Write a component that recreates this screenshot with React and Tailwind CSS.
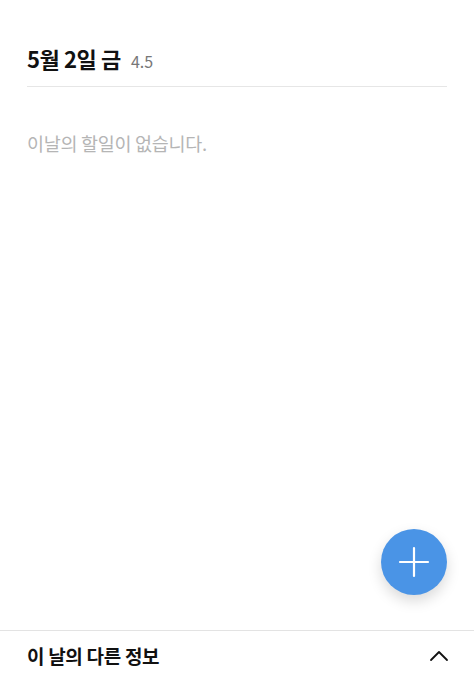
import React from "react";

const font = {
  fontFamily: '"Noto Sans CJK KR", "Noto Sans", sans-serif',
};

const App = () => {
  return (
    <div
      className="relative flex h-[681px] w-full flex-col bg-white"
      style={font}
    >
      <div className="flex-1 px-[27px]">
        <div className="flex items-baseline gap-[10px] pt-[42px] pb-[11px] border-b border-[#e6e6e6]">
          <span className="text-[22px] font-bold text-[#111] tracking-[-0.4px]">
            5월 2일 금
          </span>
          <span className="text-[16px] text-[#777]">4.5</span>
        </div>
        <p className="mt-[43px] text-[18.5px] text-[#b5b5b5] tracking-[-0.3px]">
          이날의 할일이 없습니다.
        </p>
      </div>

      <button className="absolute right-[27px] bottom-[86px] flex h-[66px] w-[66px] items-center justify-center rounded-full bg-[#4a94e6] shadow-[0_6px_14px_rgba(0,0,0,0.15)]">
        <svg width="32" height="32" viewBox="0 0 32 32">
          <path
            d="M16 2v28M2 16h28"
            stroke="white"
            strokeWidth="2.2"
            strokeLinecap="round"
          />
        </svg>
      </button>

      <div className="flex h-[51px] items-center justify-between border-t border-[#e3e3e3] px-[27px]">
        <span className="text-[19px] font-bold text-[#111] tracking-[-0.3px]">
          이 날의 다른 정보
        </span>
        <svg width="20" height="12" viewBox="0 0 20 12" className="mr-[-2px]">
          <path
            d="M2 10l8-8 8 8"
            fill="none"
            stroke="#111"
            strokeWidth="1.8"
            strokeLinecap="round"
            strokeLinejoin="round"
          />
        </svg>
      </div>
    </div>
  );
};

export default App;
